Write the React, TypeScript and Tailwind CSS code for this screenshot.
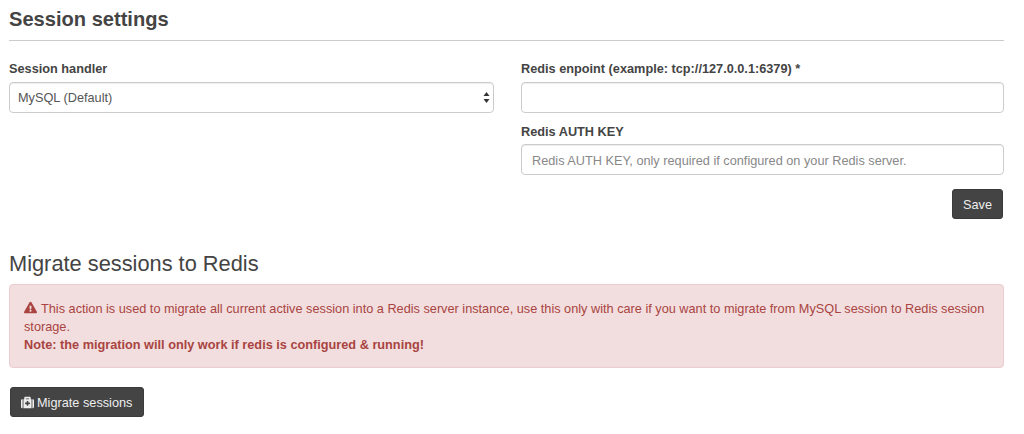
import { FaExclamationTriangle, FaMedkit } from "react-icons/fa";

export default function App() {
  return (
    <div className="w-[1024px] h-[434px] overflow-hidden bg-white pl-[9px] pr-[20px] text-[12.73px] text-[#444] font-['Liberation_Sans',Arial,sans-serif]">
      <h2 className="pt-[8px] pb-[10px] text-[20.1px] leading-[22px] font-bold text-[#444] border-b border-[#ccc]">Session settings</h2>
      <div className="flex gap-[27px] mt-[19px]">
        <div className="w-[485px]">
          <label className="block font-bold leading-[17px] mb-[5px]">Session handler</label>
          <div className="relative">
            <select defaultValue="mysql" className="w-full h-[31px] appearance-none rounded-[4px] border border-[#ccc] bg-white pl-[8px] text-[12.73px] text-[#555] shadow-[inset_0_1px_1px_rgba(0,0,0,0.075)]">
              <option value="mysql">MySQL (Default)</option>
              <option value="redis">Redis</option>
            </select>
            <svg className="absolute right-[4px] top-[10px] pointer-events-none" width="7" height="11" viewBox="0 0 7 11">
              <path d="M3.5 0L6.5 4H0.5Z M3.5 11L0.5 7H6.5Z" fill="#333" />
            </svg>
          </div>
        </div>
        <div className="w-[483px]">
          <label className="block font-bold leading-[17px] mb-[5px]">Redis enpoint (example: tcp://127.0.0.1:6379) *</label>
          <input className="block w-full h-[31px] rounded-[4px] border border-[#ccc] bg-white px-[11px] shadow-[inset_0_1px_1px_rgba(0,0,0,0.075)]" />
          <label className="block font-bold leading-[17px] mt-[10px] mb-[4px]">Redis AUTH KEY</label>
          <input
            placeholder="Redis AUTH KEY, only required if configured on your Redis server."
            className="block w-full h-[31px] rounded-[4px] border border-[#ccc] bg-white pl-[10px] pr-[10px] pt-[2px] text-[12.73px] placeholder:text-[#888] shadow-[inset_0_1px_1px_rgba(0,0,0,0.075)]"
          />
          <div className="flex justify-end mt-[14px] pr-[1px]">
            <button className="h-[30px] w-[51px] pt-[2px] rounded-[3px] bg-[#444] border border-[#3a3a3a] text-[#eee] text-[12.73px]">Save</button>
          </div>
        </div>
      </div>
      <h3 className="mt-[32px] text-[21.8px] leading-[26px] font-normal text-[#444]">Migrate sessions to Redis</h3>
      <div className="mt-[7px] h-[84px] rounded-[4px] border border-[#ebccd1] bg-[#f2dede] px-[14px] pt-[15px] text-[#a94442] leading-[18px]">
        <div>
          <FaExclamationTriangle className="inline-block align-[-1px] mr-[4px] text-[13px]" />
          This action is used to migrate all current active session into a Redis server instance, use this only with care if you want to migrate from MySQL session to Redis session storage.
        </div>
        <div className="font-bold">Note: the migration will only work if redis is configured &amp; running!</div>
      </div>
      <button className="ml-[1px] mt-[19px] flex items-center gap-[3px] h-[30px] w-[134px] pl-[10px] pt-[2px] rounded-[3px] bg-[#444] border border-[#3a3a3a] text-[#eee] text-[12.73px]">
        <FaMedkit className="text-[13px] -mt-[1px]" />
        Migrate sessions
      </button>
    </div>
  );
}
